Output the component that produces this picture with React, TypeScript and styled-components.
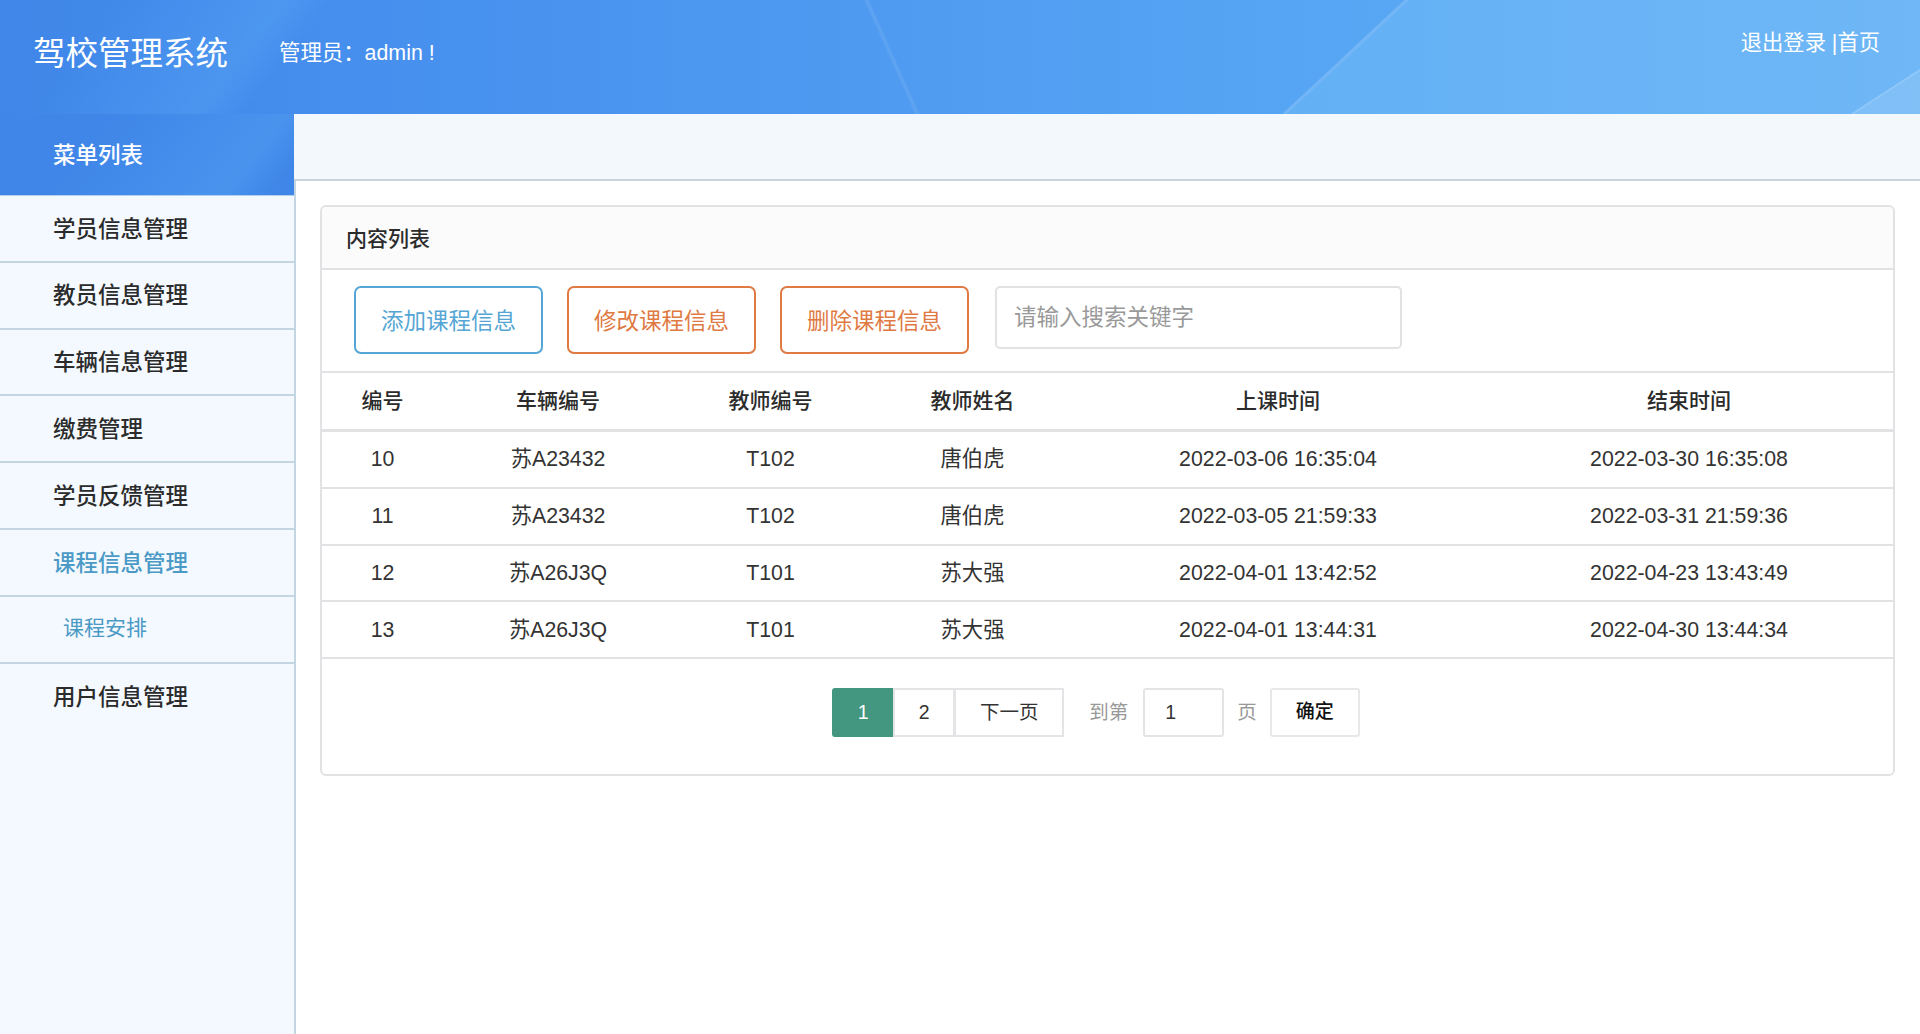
import React from "react";
import styled, { createGlobalStyle } from "styled-components";

const FONT = `"Liberation Sans", "Noto Sans CJK SC", sans-serif`;

const GlobalStyle = createGlobalStyle`
  html, body { margin: 0; padding: 0; background: #fff; }
  * { box-sizing: border-box; }
  body { font-family: ${FONT}; color: #333; overflow: hidden; line-height: 1.4; }
  button, input { line-height: 1.4; }
`;

const Page = styled.div`
  width: 1920px;
  height: 1034px;
  display: flex;
  flex-direction: column;
  overflow: hidden;
`;

const Header = styled.header`
  height: 114px;
  flex: none;
  display: flex;
  align-items: center;
  padding: 0 40px 0 33px;
  color: #fff;
  background:
    linear-gradient(147deg, transparent 1103px, rgba(255, 255, 255, 0.26) 1104px, rgba(255, 255, 255, 0.12) 1106px),
    linear-gradient(137deg, transparent 957px, rgba(255, 255, 255, 0.2) 959px, rgba(150, 215, 252, 0.22) 962px),
    linear-gradient(66deg, transparent 835px, rgba(255, 255, 255, 0.1) 838px, transparent 841px),
    linear-gradient(128deg, transparent 90px, rgba(110, 190, 255, 0.2) 225px, transparent 262px),
    linear-gradient(90deg, #3f86e8 0, #4790ee 400px, #4f9bf1 900px, #55a5f4 1280px, #64aef4 1920px);
`;

const Title = styled.h1`
  margin: 0 0 6px;
  font-size: 32.5px;
  font-weight: 400;
  line-height: 40px;
`;

const Admin = styled.span`
  margin: 0 0 6px 51px;
  font-size: 21.4px;
`;

const HeaderLinks = styled.div`
  margin-left: auto;
  align-self: flex-start;
  margin-top: 28px;
  font-size: 21.3px;
  line-height: 30px;
`;

const Body = styled.div`
  flex: 1;
  display: flex;
  min-height: 0;
`;

const Sidebar = styled.aside`
  width: 296px;
  flex: none;
  background: #f3f9fe;
  border-right: 2px solid #c4d6e2;
`;

const MenuHead = styled.div`
  height: 82px;
  display: flex;
  align-items: center;
  padding: 2px 0 0 53px;
  color: #fff;
  font-size: 22.5px;
  font-weight: 500;
  border-bottom: 1px solid #b4cfee;
  background:
    linear-gradient(128deg, transparent 90px, rgba(110, 190, 255, 0.24) 225px, transparent 262px),
    #3f86e8;
`;

const MenuItem = styled.div<{ $active?: boolean; $sub?: boolean; $last?: boolean }>`
  height: 66.8px;
  display: flex;
  align-items: center;
  padding: ${(p) => (p.$sub ? "0 0 2px 63px" : "2px 0 0 53px")};
  font-size: ${(p) => (p.$sub ? "21px" : "22.5px")};
  font-weight: ${(p) => (p.$sub ? 400 : 500)};
  color: ${(p) => (p.$active || p.$sub ? "#4b9ac6" : "#2b2b2b")};
  border-bottom: ${(p) => (p.$last ? "none" : "2px solid #c4d6e2")};
`;

const Main = styled.main`
  flex: 1;
  min-width: 0;
`;

const TopBar = styled.div`
  height: 67px;
  margin-left: -2px;
  position: relative;
  background: #f3f8fd;
  border-bottom: 2px solid #c9d3de;
`;

const Content = styled.div`
  padding: 24px 25px 0 24px;
`;

const Panel = styled.section`
  height: 571px;
  border: 2px solid #e2e2e4;
  border-radius: 6px;
  background: #fff;
`;

const PanelHead = styled.div`
  height: 63px;
  display: flex;
  align-items: center;
  padding: 3px 0 0 24px;
  font-size: 21px;
  font-weight: 500;
  color: #2b2b2b;
  background: #fbfbfb;
  border-bottom: 2px solid #e2e2e4;
  border-radius: 5px 5px 0 0;
`;

const Toolbar = styled.div`
  height: 103px;
  display: flex;
  align-items: flex-start;
  gap: 24px;
  padding: 16px 0 0 32px;
  border-bottom: 2px solid #e2e2e4;
`;

const ActionButton = styled.button<{ $tone: string }>`
  width: 189px;
  height: 68px;
  padding: 3px 0 0;
  background: #fff;
  border: 2px solid ${(p) => p.$tone};
  border-radius: 7px;
  color: ${(p) => p.$tone};
  font-family: ${FONT};
  font-size: 22.5px;
`;

const SearchInput = styled.input`
  width: 407px;
  height: 63px;
  margin-left: 2px;
  padding: 0 17px;
  background: #fff;
  border: 2px solid #e2e2e4;
  border-radius: 5px;
  font-family: ${FONT};
  font-size: 22.5px;
  outline: none;
  &::placeholder {
    color: #999;
    opacity: 1;
  }
`;

const Table = styled.table`
  width: 100%;
  table-layout: fixed;
  border-collapse: separate;
  border-spacing: 0;
`;

const Col = styled.col<{ $width?: number }>`
  width: ${(p) => (p.$width ? `${p.$width}px` : "auto")};
`;

const Th = styled.th`
  height: 59px;
  padding: 0;
  font-size: 21px;
  font-weight: 500;
  color: #2b2b2b;
  text-align: center;
  border-bottom: 3px solid #e2e2e4;
  &:last-child {
    padding-left: 6px;
  }
`;

const Td = styled.td`
  height: 56.75px;
  padding: 2px 0 0;
  font-size: 21.3px;
  color: #333;
  text-align: center;
  border-bottom: 2px solid #e2e2e4;
  &:last-child {
    padding-left: 6px;
  }
`;

const Pager = styled.div`
  display: flex;
  align-items: center;
  justify-content: center;
  padding: 29px 22px 0 0;
  font-size: 19.5px;
`;

const PageLink = styled.a<{ $current?: boolean; $wide?: boolean }>`
  width: ${(p) => (p.$wide ? "110px" : "62px")};
  height: 49px;
  display: flex;
  align-items: center;
  justify-content: center;
  margin-left: -1px;
  padding-top: 1px;
  color: ${(p) => (p.$current ? "#fff" : "#333")};
  background: ${(p) => (p.$current ? "#43967f" : "#fff")};
  border: 2px solid ${(p) => (p.$current ? "#43967f" : "#e4e4e6")};
  border-radius: ${(p) => (p.$current ? "3px 0 0 3px" : "0")};
`;

const PagerText = styled.span`
  color: #999;
  margin: 0 13px;
`;

const JumpText = styled(PagerText)`
  margin: 0 15px 0 25px;
`;

const PageInput = styled.input`
  width: 81px;
  height: 49px;
  padding: 0 0 0 20px;
  background: #fff;
  border: 2px solid #e4e4e6;
  border-radius: 3px;
  color: #333;
  font-family: ${FONT};
  font-size: 19.5px;
  outline: none;
`;

const ConfirmButton = styled.button`
  width: 90px;
  height: 49px;
  padding: 0;
  background: #fff;
  border: 2px solid #e8e8ea;
  border-radius: 3px;
  color: #111;
  font-family: ${FONT};
  font-size: 19px;
  font-weight: 500;
`;

const menu = ["学员信息管理", "教员信息管理", "车辆信息管理", "缴费管理", "学员反馈管理"];

const columns = [
  { title: "编号", width: 121 },
  { title: "车辆编号", width: 230 },
  { title: "教师编号", width: 195 },
  { title: "教师姓名", width: 209 },
  { title: "上课时间", width: 402 },
  { title: "结束时间" },
];

const rows = [
  ["10", "苏A23432", "T102", "唐伯虎", "2022-03-06 16:35:04", "2022-03-30 16:35:08"],
  ["11", "苏A23432", "T102", "唐伯虎", "2022-03-05 21:59:33", "2022-03-31 21:59:36"],
  ["12", "苏A26J3Q", "T101", "苏大强", "2022-04-01 13:42:52", "2022-04-23 13:43:49"],
  ["13", "苏A26J3Q", "T101", "苏大强", "2022-04-01 13:44:31", "2022-04-30 13:44:34"],
];

export default function App() {
  return (
    <Page>
      <GlobalStyle />
      <Header>
        <Title>驾校管理系统</Title>
        <Admin>管理员：admin !</Admin>
        <HeaderLinks>退出登录 |首页</HeaderLinks>
      </Header>
      <Body>
        <Sidebar>
          <MenuHead>菜单列表</MenuHead>
          {menu.map((name) => (
            <MenuItem key={name}>{name}</MenuItem>
          ))}
          <MenuItem $active>课程信息管理</MenuItem>
          <MenuItem $sub>课程安排</MenuItem>
          <MenuItem $last>用户信息管理</MenuItem>
        </Sidebar>
        <Main>
          <TopBar />
          <Content>
            <Panel>
              <PanelHead>内容列表</PanelHead>
              <Toolbar>
                <ActionButton $tone="#55a6d4">添加课程信息</ActionButton>
                <ActionButton $tone="#e07a43">修改课程信息</ActionButton>
                <ActionButton $tone="#e07a43">删除课程信息</ActionButton>
                <SearchInput placeholder="请输入搜索关键字" />
              </Toolbar>
              <Table>
                <colgroup>
                  {columns.map((c) => (
                    <Col key={c.title} $width={c.width} />
                  ))}
                </colgroup>
                <thead>
                  <tr>
                    {columns.map((c) => (
                      <Th key={c.title}>{c.title}</Th>
                    ))}
                  </tr>
                </thead>
                <tbody>
                  {rows.map((r) => (
                    <tr key={r[0]}>
                      {r.map((v, i) => (
                        <Td key={i}>{v}</Td>
                      ))}
                    </tr>
                  ))}
                </tbody>
              </Table>
              <Pager>
                <PageLink $current>1</PageLink>
                <PageLink>2</PageLink>
                <PageLink $wide>下一页</PageLink>
                <JumpText>到第</JumpText>
                <PageInput defaultValue="1" />
                <PagerText>页</PagerText>
                <ConfirmButton>确定</ConfirmButton>
              </Pager>
            </Panel>
          </Content>
        </Main>
      </Body>
    </Page>
  );
}
